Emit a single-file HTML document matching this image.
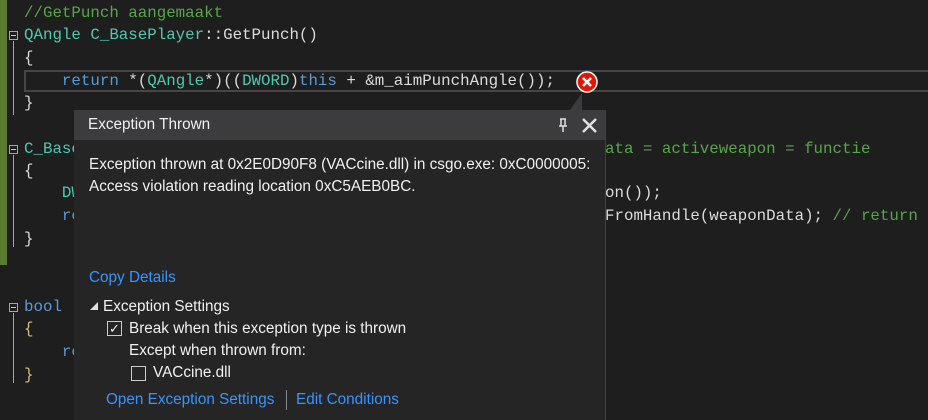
<!DOCTYPE html>
<html><head><meta charset="utf-8"><style>
body{margin:0;width:928px;height:414px;background:#1e1e1e;overflow:hidden;position:relative;font-family:"Liberation Sans",sans-serif}
.bar{position:absolute;left:0;width:7px;background:#5b7b2f}
.code{position:absolute;left:24px;top:0;font-family:"Liberation Mono",monospace;font-size:15.8px;color:#dcdcdc;white-space:pre}
.l{position:absolute;left:0;height:23px;line-height:23px}
.r{position:absolute;left:581px;height:23px;line-height:23px}
.t{color:#4ec9b0}.k{color:#569cd6}.c{color:#57a64a}.b{color:#d7ba7d}
.fold{position:absolute;left:9px;width:9px;height:9px;border:1px solid #a5a5a5;box-sizing:border-box}
.fold:after{content:"";position:absolute;left:1px;top:3px;width:5px;height:1px;background:#c8c8c8}
.vl{position:absolute;left:13px;width:1px;background:#a5a5a5}
.cur{position:absolute;left:24px;top:70px;width:910px;height:22px;border:2px solid #464646;box-sizing:border-box}
.pop{position:absolute;left:74px;top:110px;width:531px;height:310px;background:#252526;border-right:1px solid #3f3f46;color:#f1f1f1;font-size:15.3px}
.hd{height:30px;background:#3c3c3f;line-height:30px;padding-left:14px}
.a{color:#3794ff}
.p{position:absolute;white-space:nowrap}
</style></head><body>
<div class="bar" style="top:0;height:265px"></div>
<div class="cur"></div>
<div class="fold" style="top:31px"></div><div class="vl" style="top:41px;height:74px"></div>
<div class="fold" style="top:145px"></div><div class="vl" style="top:155px;height:92px"></div>
<div class="fold" style="top:303px"></div><div class="vl" style="top:313px;height:70px"></div>
<div class="code">
<div class="l c" style="top:2px">//GetPunch aangemaakt</div>
<div class="l" style="top:24px"><span class="t">QAngle C_BasePlayer</span>::GetPunch()</div>
<div class="l" style="top:47px">{</div>
<div class="l" style="top:70px">    <span class="k">return</span> *(<span class="t">QAngle</span>*)((<span class="t">DWORD</span>)<span class="k">this</span> + &amp;m_aimPunchAngle());</div>
<div class="l" style="top:92px">}</div>
<div class="l" style="top:138px"><span class="t">C_Base</span></div>
<div class="r c" style="top:138px">ata = activeweapon = functie</div>
<div class="l" style="top:160px">{</div>
<div class="l" style="top:182px">    <span class="t">DW</span></div>
<div class="r" style="top:182px">on());</div>
<div class="l" style="top:205px">    <span class="k">re</span></div>
<div class="r" style="top:205px">FromHandle(weaponData); <span class="c">// return</span></div>
<div class="l" style="top:228px">}</div>
<div class="l" style="top:296px"><span class="k">bool</span> (</div>
<div class="l b" style="top:318px">{</div>
<div class="l" style="top:341px">    <span class="k">re</span></div>
<div class="l b" style="top:364px">}</div>
</div>
<svg style="position:absolute;left:576px;top:71px" width="22" height="22"><circle cx="11" cy="11" r="10" fill="#e51400" stroke="#fff" stroke-width="1.5"/><path d="M7 7L15 15M15 7L7 15" stroke="#fff" stroke-width="2.6"/></svg>
<div style="position:absolute;left:570px;top:93px;width:0;height:0;border-left:12px solid transparent;border-bottom:17px solid #3c3c3f"></div>
<div class="pop">
<div class="hd">Exception Thrown
<svg style="position:absolute;left:484px;top:8px" width="10" height="14"><path d="M2 1H8M3 1V8M7 1V8M1 8H9M5 8V14" stroke="#e0e0e0" stroke-width="1.5" fill="none"/></svg>
<svg style="position:absolute;left:508px;top:8px" width="15" height="15"><path d="M1 1L14 14M14 1L1 14" stroke="#e0e0e0" stroke-width="2.5"/></svg></div>
<div class="p" style="left:15px;top:44px;line-height:22px">Exception thrown at 0x2E0D90F8 (VACcine.dll) in csgo.exe: 0xC0000005:<br>Access violation reading location 0xC5AEB0BC.</div>
<div class="p a" style="left:15px;top:159px">Copy Details</div>
<div class="p" style="left:16px;top:188px"><svg width="9" height="9" style="margin-right:4px"><path d="M8 0V8H0Z" fill="#e0e0e0"/></svg>Exception Settings</div>
<div class="p" style="left:33px;top:211px;width:13px;height:13px;border:1px solid #ccc;font-size:13px;line-height:13px;text-align:center">✓</div>
<div class="p" style="left:55px;top:210px">Break when this exception type is thrown</div>
<div class="p" style="left:55px;top:232px">Except when thrown from:</div>
<div class="p" style="left:57px;top:256px;width:13px;height:13px;border:1px solid #ccc"></div>
<div class="p" style="left:79px;top:254px">VACcine.dll</div>
<div class="p a" style="left:32px;top:281px">Open Exception Settings</div>
<div class="p" style="left:212px;top:280px;width:1px;height:20px;background:#888"></div>
<div class="p a" style="left:222px;top:281px">Edit Conditions</div>
</div>
</body></html>
